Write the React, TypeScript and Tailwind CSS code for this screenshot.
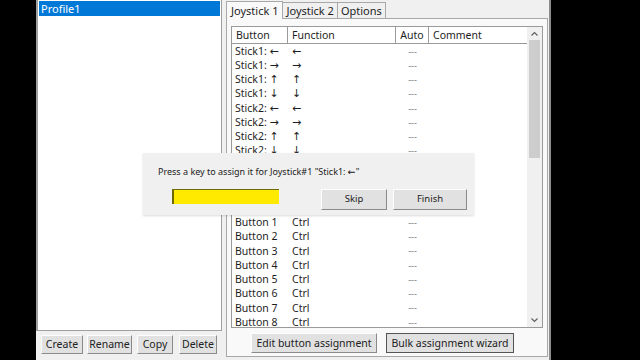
import React from 'react';

const rows: [string, string, string][] = [
  ['Stick1: ', '←', '←'],
  ['Stick1: ', '→', '→'],
  ['Stick1: ', '↑', '↑'],
  ['Stick1: ', '↓', '↓'],
  ['Stick2: ', '←', '←'],
  ['Stick2: ', '→', '→'],
  ['Stick2: ', '↑', '↑'],
  ['Stick2: ', '↓', '↓'],
  ['POV: ', '←', '←'],
  ['POV: ', '→', '→'],
  ['POV: ', '↑', '↑'],
  ['POV: ', '↓', 'Bulk assignment wizard'],
  ['Button 1', '', 'Ctrl'],
  ['Button 2', '', 'Ctrl'],
  ['Button 3', '', 'Ctrl'],
  ['Button 4', '', 'Ctrl'],
  ['Button 5', '', 'Ctrl'],
  ['Button 6', '', 'Ctrl'],
  ['Button 7', '', 'Ctrl'],
  ['Button 8', '', 'Ctrl'],
];

const isArrow = (s: string) => s.length === 1 && '←→↑↓'.includes(s);

function Arrow({ c }: { c: string }) {
  return (
    <span className="text-[11px]" style={{ fontFamily: '"DejaVu Sans", sans-serif' }}>
      {c}
    </span>
  );
}

function WinButton({ label, className = '', strong = false }: { label: string; className?: string; strong?: boolean }) {
  return (
    <div
      className={`shrink-0 flex items-center justify-center bg-[#e1e1e1] border ${
        strong ? 'border-[#555]' : 'border-t-[#fdfdfd] border-l-[#fdfdfd] border-r-[#8a8a8a] border-b-[#8a8a8a]'
      } text-[#222] ${className}`}
    >
      {label}
    </div>
  );
}

export default function App() {
  return (
    <div className="relative w-[640px] h-[360px] bg-black overflow-hidden text-[10.5px] leading-none text-[#1e1e1e]" style={{ fontFamily: '"Noto Sans", "Open Sans", sans-serif' }}>
      <div className="ml-[36px] w-[515px] h-[360px] flex bg-[#f0f0f0] border-r-2 border-[#8c8c8c]">
        {/* profiles */}
        <div className="w-[186px] flex flex-col">
          <div className="h-[331px] bg-white border-l-2 border-r border-b border-[#a0a0a0] p-[1px]">
            <div className="h-[15px] bg-[#0078d7] text-white flex items-center px-[2px] text-[11px]">Profile1</div>
          </div>
          <div className="flex gap-[4px] pl-[5px] pt-[4px] text-[10.5px]">
            <WinButton label="Create" className="w-[42px] h-[19px]" />
            <WinButton label="Rename" className="w-[45px] h-[19px]" />
            <WinButton label="Copy" className="w-[36px] h-[19px] ml-[1px]" />
            <WinButton label="Delete" className="w-[38px] h-[19px] ml-[2px]" />
          </div>
        </div>

        {/* joystick tabs */}
        <div className="flex-1 flex flex-col pl-[4px] pr-[1px]">
          <div className="h-[18px] flex items-end text-[11px]">
            <div className="h-[18px] px-[4px] flex items-center bg-[#f9f9f9] border-l border-t border-r border-[#a8a8a8] -mb-px relative z-10">Joystick 1</div>
            <div className="h-[16px] px-[3px] flex items-center border-r border-t border-[#a8a8a8]">Joystick 2</div>
            <div className="h-[16px] px-[3px] flex items-center border-r border-t border-[#a8a8a8]">Options</div>
          </div>
          <div className="flex-1 mb-[3px] border border-[#a8a8a8] bg-[#f9f9f9] flex flex-col px-[4px] pt-[7px]">
            <div className="h-[302px] border border-[#9a9a9a] bg-white flex">
              <div className="flex-1 flex flex-col overflow-hidden">
                <div className="h-[17px] shrink-0 flex border-b border-[#9a9a9a] text-[10.5px]">
                  <div className="w-[56px] border-r border-[#9a9a9a] flex items-center pl-[4px]">Button</div>
                  <div className="w-[108px] border-r border-[#9a9a9a] flex items-center pl-[4px]">Function</div>
                  <div className="w-[33px] border-r border-[#9a9a9a] flex items-center justify-center">Auto</div>
                  <div className="flex-1 flex items-center pl-[4px]">Comment</div>
                </div>
                <div className="flex flex-col">
                  {rows.map(([b, a, f], i) => (
                    <div key={i} className="h-[14.28px] shrink-0 flex items-center text-[10.5px]">
                      <div className="w-[56px] pl-[3px] whitespace-nowrap">
                        {b}
                        {a && <Arrow c={a} />}
                      </div>
                      <div className="w-[108px] pl-[4px] whitespace-nowrap">{isArrow(f) ? <Arrow c={f} /> : f}</div>
                      <div className="w-[33px] text-center text-[#777] text-[9px]">---</div>
                    </div>
                  ))}
                </div>
              </div>
              {/* scrollbar */}
              <div className="w-[15px] bg-[#f0f0f0] flex flex-col items-center">
                <div className="h-[13px] flex items-center justify-center">
                  <svg width="7" height="5" viewBox="0 0 7 5"><path d="M0.5 4.5 L3.5 1.5 L6.5 4.5" fill="none" stroke="#606060" strokeWidth="1.2" /></svg>
                </div>
                <div className="w-[11px] h-[118px] bg-[#cdcdcd]" />
                <div className="flex-1" />
                <div className="h-[13px] flex items-center justify-center">
                  <svg width="7" height="5" viewBox="0 0 7 5"><path d="M0.5 0.5 L3.5 3.5 L6.5 0.5" fill="none" stroke="#606060" strokeWidth="1.2" /></svg>
                </div>
              </div>
            </div>
            <div className="flex pl-[20px] gap-[9px] pt-[5px] text-[10.5px]">
              <WinButton label="Edit button assignment" className="w-[126px] h-[20px]" />
              <WinButton label="Bulk assignment wizard" className="w-[128px] h-[20px]" strong />
            </div>
          </div>
        </div>
      </div>

      {/* key capture popup */}
      <div className="absolute left-[143px] top-[153px] w-[331px] h-[62px] bg-[#f0f0f0] shadow-[0_1px_2px_rgba(0,0,0,0.15)] flex flex-col pl-[15px] pr-[4px] pt-[14px]">
        <div className="text-[9px] text-[#222] whitespace-nowrap">
          Press a key to assign it for Joystick#1 "Stick1: <span className="text-[9.5px]" style={{ fontFamily: '"DejaVu Sans", sans-serif' }}>←</span>"
        </div>
        <div className="flex items-start mt-[12px]">
          <div className="shrink-0 ml-[14px] w-[107px] h-[15px] bg-[#ffea00] border-l-2 border-t border-[#6b6b00]" />
          <WinButton label="Skip" className="ml-[42px] w-[66px] h-[21px] text-[9.5px]" />
          <WinButton label="Finish" className="ml-[6px] w-[74px] h-[21px] text-[9.5px]" />
        </div>
      </div>
    </div>
  );
}
